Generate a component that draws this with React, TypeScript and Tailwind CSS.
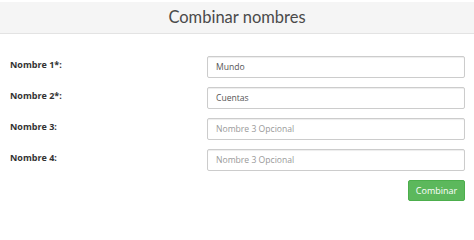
const rows = [
  { label: 'Nombre 1*:', value: 'Mundo', placeholder: '' },
  { label: 'Nombre 2*:', value: 'Cuentas', placeholder: '' },
  { label: 'Nombre 3:', value: '', placeholder: 'Nombre 3 Opcional' },
  { label: 'Nombre 4:', value: '', placeholder: 'Nombre 3 Opcional' },
];

export default function App() {
  return (
    <div className="w-[474px] h-[212px] bg-white font-['Open_Sans',sans-serif] overflow-hidden">
      {/* Panel heading */}
      <div className="mt-[2px] h-[32px] bg-[#f5f5f5] border-b border-[#e3e3e3] flex items-center justify-center">
        <h1 className="font-['Lato',sans-serif] font-normal text-[16.5px] text-[#4a4a4a] leading-none">
          Combinar nombres
        </h1>
      </div>

      {/* Form */}
      <div className="pt-[22px] pl-[10px] pr-[9px] flex flex-col gap-[9px]">
        {rows.map((row) => (
          <div key={row.label} className="flex items-start justify-between">
            <label className="pt-[2px] text-[9px] leading-[14px] font-bold text-[#333]">
              {row.label}
            </label>
            <input
              readOnly
              defaultValue={row.value}
              placeholder={row.placeholder}
              className="w-[258px] h-[22px] px-[8px] text-[8.6px] text-[#555] placeholder:text-[#999] bg-white border border-[#ccc] rounded-[2px] shadow-[inset_0_1px_1px_rgba(0,0,0,0.075)] outline-none"
            />
          </div>
        ))}
        <div className="flex justify-end">
          <button className="w-[57px] h-[21px] bg-[#5cb85c] border border-[#4cae4c] rounded-[2px] text-white text-[9px] leading-none">
            Combinar
          </button>
        </div>
      </div>
    </div>
  );
}
